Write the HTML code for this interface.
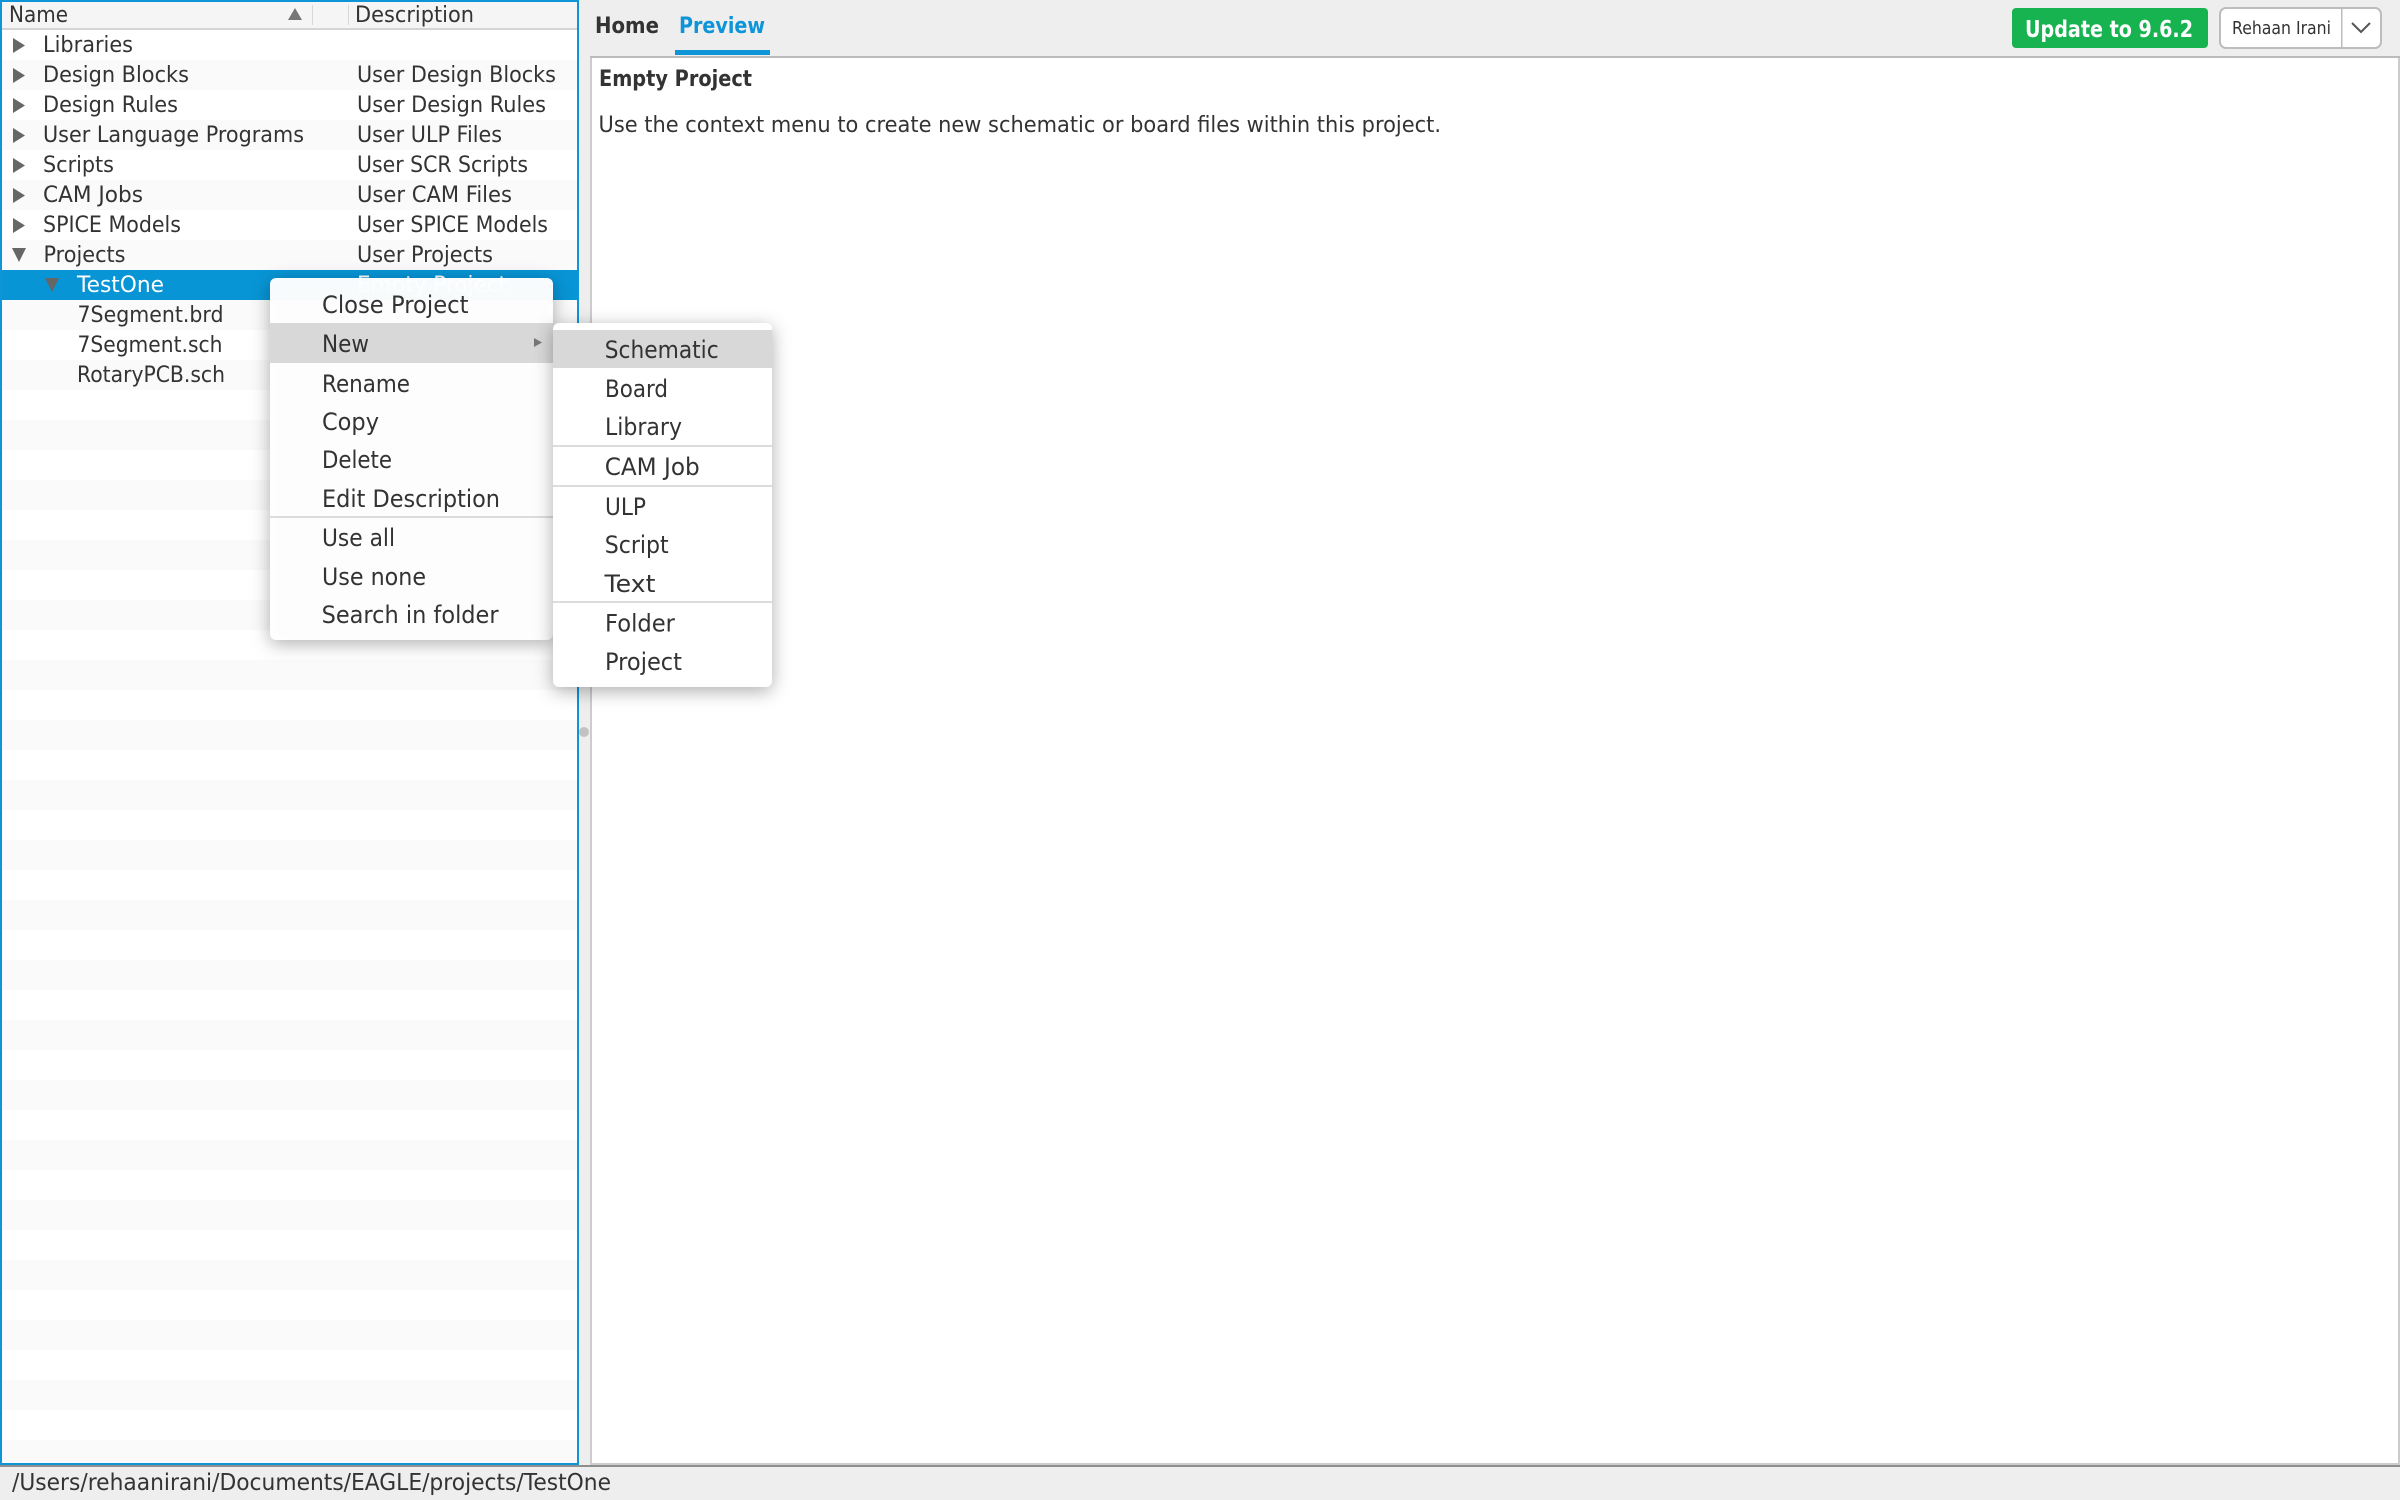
<!DOCTYPE html>
<html lang="en">
<head>
<meta charset="utf-8">
<title>EAGLE Control Panel</title>
<style>
html,body{margin:0;padding:0;width:2400px;height:1500px;overflow:hidden;background:#eee}
svg{display:block}
text{font-family:"DejaVu Sans","Liberation Sans",sans-serif;fill:#333;font-size:22px}
.m{font-size:24px}
.b{font-weight:bold}
.sh{filter:drop-shadow(0 4px 9px rgba(0,0,0,.32))}
</style>
</head>
<body>
<svg width="2400" height="1500" viewBox="0 0 2400 1500" xmlns="http://www.w3.org/2000/svg">
<rect width="2400" height="1500" fill="#eeeeee"/>

<!-- left tree panel -->
<rect x="0" y="0" width="579" height="1465" fill="#0d95d8"/>
<rect x="2" y="2" width="575" height="1461" fill="#ffffff"/>
<rect x="2" y="2" width="575" height="26" fill="#f5f5f5"/>
<rect x="2" y="28" width="575" height="2" fill="#d4d4d4"/>
<g fill="#fafafa">
<rect x="2" y="60" width="575" height="30"/><rect x="2" y="120" width="575" height="30"/><rect x="2" y="180" width="575" height="30"/><rect x="2" y="240" width="575" height="30"/>
<rect x="2" y="300" width="575" height="30"/><rect x="2" y="360" width="575" height="30"/><rect x="2" y="420" width="575" height="30"/><rect x="2" y="480" width="575" height="30"/>
<rect x="2" y="540" width="575" height="30"/><rect x="2" y="600" width="575" height="30"/><rect x="2" y="660" width="575" height="30"/><rect x="2" y="720" width="575" height="30"/>
<rect x="2" y="780" width="575" height="30"/><rect x="2" y="840" width="575" height="30"/><rect x="2" y="900" width="575" height="30"/><rect x="2" y="960" width="575" height="30"/>
<rect x="2" y="1020" width="575" height="30"/><rect x="2" y="1080" width="575" height="30"/><rect x="2" y="1140" width="575" height="30"/><rect x="2" y="1200" width="575" height="30"/>
<rect x="2" y="1260" width="575" height="30"/><rect x="2" y="1320" width="575" height="30"/><rect x="2" y="1380" width="575" height="30"/><rect x="2" y="1440" width="575" height="23"/>
</g>
<rect x="2" y="270" width="575" height="30" fill="#0895d6"/>

<!-- header -->
<text x="9" y="22" textLength="59" lengthAdjust="spacingAndGlyphs">Name</text>
<path d="M288 20 L295 8 L302 20 Z" fill="#777"/>
<rect x="312" y="5" width="1" height="20" fill="#d8d8d8"/>
<rect x="348" y="5" width="1" height="20" fill="#d8d8d8"/>
<text x="355" y="22" textLength="119" lengthAdjust="spacingAndGlyphs">Description</text>

<!-- tree arrows -->
<g fill="#666">
<path d="M13 38 L25 45.5 L13 53 Z"/><path d="M13 68 L25 75.5 L13 83 Z"/><path d="M13 98 L25 105.5 L13 113 Z"/><path d="M13 128 L25 135.5 L13 143 Z"/>
<path d="M13 158 L25 165.5 L13 173 Z"/><path d="M13 188 L25 195.5 L13 203 Z"/><path d="M13 218 L25 225.5 L13 233 Z"/>
<path d="M12 248 L26 248 L19 262 Z"/>
<path d="M45 278 L59 278 L52 292 Z"/>
</g>

<!-- tree labels -->
<text x="43" y="52" textLength="90" lengthAdjust="spacingAndGlyphs">Libraries</text>
<text x="43" y="82" textLength="146" lengthAdjust="spacingAndGlyphs">Design Blocks</text>
<text x="43" y="112" textLength="135" lengthAdjust="spacingAndGlyphs">Design Rules</text>
<text x="43" y="142" textLength="261" lengthAdjust="spacingAndGlyphs">User Language Programs</text>
<text x="43" y="172" textLength="71" lengthAdjust="spacingAndGlyphs">Scripts</text>
<text x="43" y="202" textLength="100" lengthAdjust="spacingAndGlyphs">CAM Jobs</text>
<text x="43" y="232" textLength="138" lengthAdjust="spacingAndGlyphs">SPICE Models</text>
<text x="43.5" y="262" textLength="82" lengthAdjust="spacingAndGlyphs">Projects</text>
<text x="77" y="292" textLength="87" lengthAdjust="spacingAndGlyphs" style="fill:#fff">TestOne</text>
<text x="77.5" y="322" textLength="146" lengthAdjust="spacingAndGlyphs">7Segment.brd</text>
<text x="77.5" y="352" textLength="145" lengthAdjust="spacingAndGlyphs">7Segment.sch</text>
<text x="77" y="382" textLength="148" lengthAdjust="spacingAndGlyphs">RotaryPCB.sch</text>

<text x="357" y="82" textLength="199" lengthAdjust="spacingAndGlyphs">User Design Blocks</text>
<text x="357" y="112" textLength="189" lengthAdjust="spacingAndGlyphs">User Design Rules</text>
<text x="357" y="142" textLength="145" lengthAdjust="spacingAndGlyphs">User ULP Files</text>
<text x="357" y="172" textLength="171" lengthAdjust="spacingAndGlyphs">User SCR Scripts</text>
<text x="357" y="202" textLength="155" lengthAdjust="spacingAndGlyphs">User CAM Files</text>
<text x="357" y="232" textLength="191" lengthAdjust="spacingAndGlyphs">User SPICE Models</text>
<text x="357" y="262" textLength="136" lengthAdjust="spacingAndGlyphs">User Projects</text>
<text x="357" y="292" textLength="150" lengthAdjust="spacingAndGlyphs" style="fill:#fff">Empty Project</text>

<!-- splitter -->
<circle cx="584" cy="732" r="5" fill="#c2c2c2"/>

<!-- right panel -->
<rect x="590" y="56" width="1810" height="1409" fill="#cccccc"/>
<rect x="590" y="56" width="1810" height="2" fill="#bbbbbb"/>
<rect x="592" y="58" width="1806" height="1405" fill="#ffffff"/>
<text x="595" y="33" class="b" textLength="64" lengthAdjust="spacingAndGlyphs">Home</text>
<text x="679" y="33" class="b" textLength="86" lengthAdjust="spacingAndGlyphs" style="fill:#0d95d8">Preview</text>
<rect x="675" y="50" width="95" height="5" fill="#0d95d8"/>
<text x="599" y="86" class="b" textLength="153" lengthAdjust="spacingAndGlyphs">Empty Project</text>
<text x="598.5" y="132" textLength="842.5" lengthAdjust="spacingAndGlyphs">Use the context menu to create new schematic or board files within this project.</text>

<!-- top right buttons -->
<rect x="2012" y="8" width="196" height="40" rx="4" fill="#17b350"/>
<text x="2025" y="37" class="b" textLength="168" lengthAdjust="spacingAndGlyphs" style="fill:#fff;font-size:23px">Update to 9.6.2</text>
<rect x="2220" y="8" width="161" height="40" rx="6" fill="#ffffff" stroke="#bdbdbd" stroke-width="2"/>
<rect x="2341" y="8" width="1.5" height="40" fill="#bdbdbd"/>
<text x="2232" y="34" textLength="99" lengthAdjust="spacingAndGlyphs" style="font-size:18px">Rehaan Irani</text>
<path d="M2352 23 L2361 32 L2370 23" fill="none" stroke="#555" stroke-width="2"/>

<!-- status bar -->
<rect x="0" y="1465" width="2400" height="2" fill="#8f8f8f"/>
<text x="12" y="1490" textLength="599" lengthAdjust="spacingAndGlyphs" style="font-size:23px">/Users/rehaanirani/Documents/EAGLE/projects/TestOne</text>

<!-- context menu -->
<g class="sh">
<rect x="270" y="278" width="283" height="362" rx="6" fill="#ffffff" fill-opacity=".97"/>
</g>
<rect x="270" y="323" width="283" height="40" fill="#d8d8d8"/>
<rect x="270" y="516" width="283" height="2" fill="#dcdcdc"/>
<path d="M534 338 L542 342.5 L534 347 Z" fill="#777"/>
<text class="m" x="322" y="313" textLength="146.5" lengthAdjust="spacingAndGlyphs">Close Project</text>
<text class="m" x="322" y="352" textLength="47" lengthAdjust="spacingAndGlyphs">New</text>
<text class="m" x="322" y="392" textLength="88" lengthAdjust="spacingAndGlyphs">Rename</text>
<text class="m" x="322" y="430" textLength="57" lengthAdjust="spacingAndGlyphs">Copy</text>
<text class="m" x="322" y="468" textLength="70" lengthAdjust="spacingAndGlyphs">Delete</text>
<text class="m" x="322" y="507" textLength="178" lengthAdjust="spacingAndGlyphs">Edit Description</text>
<text class="m" x="322" y="546" textLength="73" lengthAdjust="spacingAndGlyphs">Use all</text>
<text class="m" x="322" y="585" textLength="104" lengthAdjust="spacingAndGlyphs">Use none</text>
<text class="m" x="321.6" y="623" textLength="177" lengthAdjust="spacingAndGlyphs">Search in folder</text>

<!-- submenu -->
<g class="sh">
<rect x="553" y="323" width="219" height="364" rx="6" fill="#ffffff"/>
</g>
<rect x="553" y="330" width="219" height="38" fill="#d8d8d8"/>
<rect x="553" y="445" width="219" height="2" fill="#dcdcdc"/>
<rect x="553" y="485" width="219" height="2" fill="#dcdcdc"/>
<rect x="553" y="601" width="219" height="2" fill="#dcdcdc"/>
<text class="m" x="604.7" y="358" textLength="114" lengthAdjust="spacingAndGlyphs">Schematic</text>
<text class="m" x="605" y="397" textLength="63" lengthAdjust="spacingAndGlyphs">Board</text>
<text class="m" x="605" y="435" textLength="77" lengthAdjust="spacingAndGlyphs">Library</text>
<text class="m" x="604.7" y="475" textLength="95" lengthAdjust="spacingAndGlyphs">CAM Job</text>
<text class="m" x="605" y="515" textLength="41" lengthAdjust="spacingAndGlyphs">ULP</text>
<text class="m" x="604.7" y="553" textLength="64" lengthAdjust="spacingAndGlyphs">Script</text>
<text class="m" x="604.5" y="592" textLength="51" lengthAdjust="spacingAndGlyphs">Text</text>
<text class="m" x="605" y="631.5" textLength="70" lengthAdjust="spacingAndGlyphs">Folder</text>
<text class="m" x="605" y="670" textLength="77" lengthAdjust="spacingAndGlyphs">Project</text>
</svg>
</body>
</html>
